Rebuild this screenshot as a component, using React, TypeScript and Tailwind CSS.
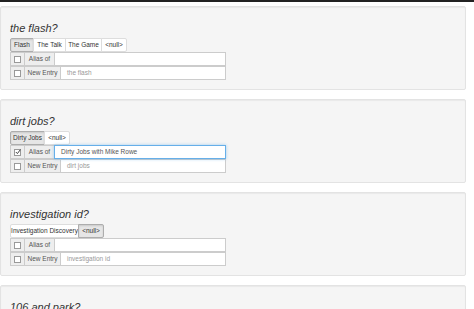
import React from "react";

type Choice = { label: string; w: number; active?: boolean };

type Entry = {
  title: string;
  choices: Choice[];
  alias?: string;
  aliasChecked?: boolean;
  placeholder: string;
};

const entries: Entry[] = [
  {
    title: "the flash?",
    choices: [
      { label: "Flash", w: 24, active: true },
      { label: "The Talk", w: 33 },
      { label: "The Game", w: 37 },
      { label: "<null>", w: 26 },
    ],
    placeholder: "the flash",
  },
  {
    title: "dirt jobs?",
    choices: [
      { label: "Dirty Jobs", w: 35, active: true },
      { label: "<null>", w: 26 },
    ],
    alias: "Dirty Jobs with Mike Rowe",
    aliasChecked: true,
    placeholder: "dirt jobs",
  },
  {
    title: "investigation id?",
    choices: [
      { label: "Investigation Discovery", w: 69 },
      { label: "<null>", w: 26, active: true },
    ],
    placeholder: "investigation id",
  },
  {
    title: "106 and park?",
    choices: [],
    placeholder: "106 and park",
  },
];

function Check({ checked }: { checked?: boolean }) {
  return (
    <span className="flex w-[15px] shrink-0 items-center justify-center border border-[#ccc] bg-[#eee]">
      <span className="relative flex h-[7px] w-[7px] items-center justify-center border border-[#999] bg-white">
        {checked && (
          <svg viewBox="0 0 6 6" className="absolute -top-[1px] left-0 h-[6px] w-[6px]">
            <path d="M0.8 3 L2.4 4.6 L5.4 0.6" fill="none" stroke="#444" strokeWidth="1" />
          </svg>
        )}
      </span>
    </span>
  );
}

function Row({
  label,
  lw,
  value,
  placeholder,
  checked,
  focused,
}: {
  label: string;
  lw: number;
  value?: string;
  placeholder?: string;
  checked?: boolean;
  focused?: boolean;
}) {
  return (
    <div className="flex h-[14px] w-[216px]">
      <Check checked={checked} />
      <span
        className="-ml-px flex shrink-0 items-center justify-center border border-[#ccc] bg-[#eee] text-[6.5px] text-[#555]"
        style={{ width: lw }}
      >
        {label}
      </span>
      <span
        className={`-ml-px flex flex-1 items-center bg-white pl-[6px] text-[6.5px] ${
          focused
            ? "relative z-10 border border-[#66afe9] shadow-[0_0_3px_rgba(102,175,233,0.6)]"
            : "border border-[#ccc]"
        } ${value ? "text-[#555]" : "text-[#999]"}`}
      >
        {value ?? placeholder}
      </span>
    </div>
  );
}

function Card({ e }: { e: Entry }) {
  return (
    <div className="w-[466px] rounded-[2px] border border-[#e3e3e3] bg-[#f5f5f5] px-[9px] pb-[9px] pt-[9px] shadow-[inset_0_1px_1px_rgba(0,0,0,0.05)]">
      <h4 className="mb-[2px] mt-[5px] text-[11px] italic leading-[15px] text-[#333]">{e.title}</h4>
      <div className="flex h-[14px]">
        {e.choices.map((c, i) => (
          <span
            key={i}
            className={`flex items-center justify-center border text-[6.5px] text-[#333] ${i > 0 ? "-ml-px" : ""} ${
              i === 0 ? "rounded-l-[2px]" : ""
            } ${i === e.choices.length - 1 ? "rounded-r-[2px]" : ""} ${
              c.active
                ? "border-[#adadad] bg-[#e6e6e6] shadow-[inset_0_1px_2px_rgba(0,0,0,0.125)]"
                : "border-[#ddd] bg-white"
            }`}
            style={{ width: c.w }}
          >
            {c.label}
          </span>
        ))}
      </div>
      <Row label="Alias of" lw={31} value={e.alias} checked={e.aliasChecked} focused={!!e.alias} />
      <Row label="New Entry" lw={37} placeholder={e.placeholder} />
    </div>
  );
}

export default function App() {
  return (
    <div className="h-[309px] overflow-hidden bg-white font-['Liberation_Sans',Arial,sans-serif]">
      <div className="h-[2px] bg-[#222]" />
      <div className="mt-[4px] flex flex-col gap-[9px]">
        {entries.map((e, i) => (
          <Card key={i} e={e} />
        ))}
      </div>
    </div>
  );
}
